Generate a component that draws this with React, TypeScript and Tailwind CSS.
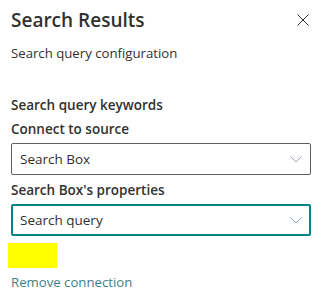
import React from "react";

type DropdownProps = {
  value: string;
  focused?: boolean;
};

function Chevron() {
  return (
    <svg width="12" height="7" viewBox="0 0 12 7" fill="none">
      <polyline
        points="0.5,0.5 6,6 11.5,0.5"
        stroke="#8fa6bf"
        strokeWidth="1"
      />
    </svg>
  );
}

function Dropdown({ value, focused }: DropdownProps) {
  return (
    <div
      className={
        focused
          ? "w-[300px] h-[32px] border-2 border-[#038387] rounded-[2px] flex items-center justify-between pl-[7px] pr-[7px]"
          : "w-[300px] h-[32px] border border-[#605e5c] rounded-[2px] flex items-center justify-between pl-[8px] pr-[8px]"
      }
    >
      <span className="text-[13.5px] leading-[20px] text-[#323130]">{value}</span>
      <Chevron />
    </div>
  );
}

export default function App() {
  return (
    <div
      className="w-[325px] h-[300px] bg-white pl-[11px] pt-[6px] text-[#323130]"
      style={{ fontFamily: '"Open Sans", "Noto Sans", sans-serif' }}
    >
      <div className="flex items-center justify-between h-[28px] pr-[16px]">
        <h1 className="text-[19px] leading-[28px] font-semibold">Search Results</h1>
        <svg width="12" height="12" viewBox="0 0 12 12" fill="none">
          <path d="M0.5 0.5 L11.5 11.5 M11.5 0.5 L0.5 11.5" stroke="#323130" strokeWidth="1" />
        </svg>
      </div>

      <p className="mt-[9px] text-[13.2px] leading-[20px]">Search query configuration</p>

      <p className="mt-[32px] text-[13.5px] leading-[20px] font-semibold">Search query keywords</p>
      <p className="mt-[4px] text-[13.5px] leading-[20px] font-semibold">Connect to source</p>

      <div className="mt-[4px]">
        <Dropdown value="Search Box" />
      </div>

      <p className="mt-[5px] text-[13.5px] leading-[20px] font-semibold">Search Box's properties</p>

      <div className="mt-[4px]">
        <Dropdown value="Search query" focused />
      </div>

      <div className="mt-[7px] -ml-[3px] w-[49px] h-[25px] bg-[#ffff00]" />

      <button className="mt-[4px] block text-[13.2px] leading-[20px] text-[#3f8083]">
        Remove connection
      </button>
    </div>
  );
}
